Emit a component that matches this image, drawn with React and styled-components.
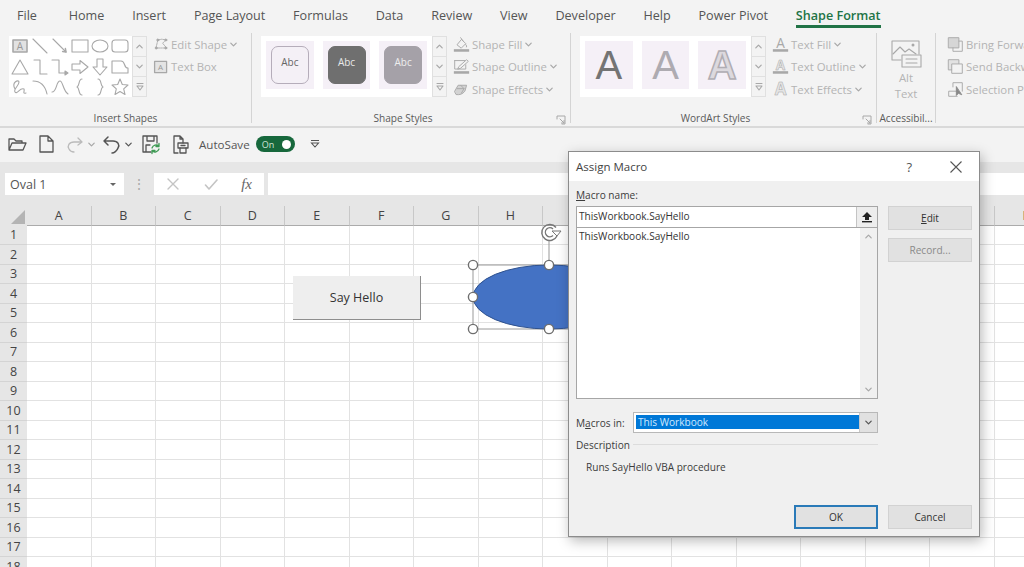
import styled, { createGlobalStyle } from "styled-components";

const UI_FONT = `"Open Sans", "Noto Sans", sans-serif`;

const GlobalStyle = createGlobalStyle`
    html, body {
        margin: 0;
        padding: 0;
        width: 1024px;
        height: 567px;
        overflow: hidden;
        background: #f3f3f3;
        font-family: ${UI_FONT};
    }
    * { box-sizing: border-box; }
    svg { flex-shrink: 0; }
`;

const TABS = ["File", "Home", "Insert", "Page Layout", "Formulas", "Data", "Review", "View", "Developer", "Help", "Power Pivot", "Shape Format"];
// the dialog covers I to O, so those headers have no readable label
const COLUMNS = ["A", "B", "C", "D", "E", "F", "G", "H", "", "", "", "", "", "", "", "P"];
const ROW_COUNT = 18;
const HANDLES = [[0, 40], [76, 40], [0, 72], [0, 104], [76, 104]];

const G = "#a8a8a8";

function Svg({ size = 20, w, h, children, vb }) {
    return (
        <svg width={w || size} height={h || size} viewBox={vb || "0 0 20 20"} fill="none" stroke={G} strokeWidth="1.1" strokeLinejoin="round" strokeLinecap="round">
            {children}
        </svg>
    );
}

const GALLERY = [
    <><rect x="3" y="4" width="14" height="12" fill="#e2e2e2" strokeWidth="1.6" /><text x="10" y="14" fontSize="10" textAnchor="middle" fill="#999" stroke="none" fontFamily="Open Sans">A</text></>,
    <path d="M3 3 L17 17" />,
    <><path d="M3 3 L16 16" /><path d="M16 16 l-3.4-.6 M16 16 l-.6-3.4" strokeWidth="1.5" /></>,
    <rect x="2" y="4" width="16" height="12" />,
    <ellipse cx="10" cy="10" rx="8" ry="6" />,
    <rect x="2" y="4" width="16" height="12" rx="3" />,
    <path d="M10 3 L18 17 H2 Z" />,
    <path d="M4 3 H10 V17 H17" />,
    <><path d="M2 3 H9 V16 H15" /><path d="M18 16 l-3-2 v4 Z" fill={G} /></>,
    <path d="M2 7 H10 V3.5 L18 10 L10 16.5 V13 H2 Z" />,
    <path d="M7 2 H13 V10 H17 L10 18 L3 10 H7 Z" />,
    <path d="M2 4 H11 C16 4 13 11 18 11 V16 H2 Z" />,
    <path d="M5 12 C1 5 9 2 9 5 C9 9 3 12 5 15 C7 18 10 10 14 12 C15 14 12 17 16 16" />,
    <path d="M3 4 C10 4 15 8 17 17" />,
    <path d="M2 15 C7 15 6 4 10 4 C13 4 13 14 18 17" />,
    <path d="M12 2 C8 2 10 9 7 10 C10 11 8 18 12 18" />,
    <path d="M8 2 C12 2 10 9 13 10 C10 11 12 18 8 18" />,
    <path d="M10 2 L12.3 7.5 L18 8 L13.7 11.8 L15 17.5 L10 14.5 L5 17.5 L6.3 11.8 L2 8 L7.7 7.5 Z" />,
];

const UpChevron = () => <Svg size={9} vb="0 0 10 10"><path d="M2 6.5 L5 3.5 L8 6.5" strokeWidth="1.4" /></Svg>;
const DownChevron = ({ dark }) => <Svg size={9} vb="0 0 10 10"><path d="M2 3.5 L5 6.5 L8 3.5" strokeWidth="1.4" stroke={dark ? "#555" : G} /></Svg>;
const MoreChevron = () => <Svg size={10} vb="0 0 10 10"><path d="M2 1.5 H8 M2 4 H8 L5 8 L2 4" strokeWidth="1.1" /></Svg>;
const Launcher = () => <Svg size={10} vb="0 0 10 10"><path d="M1 4 V1 H9 V9 H6 M4 4 L8 8 M8 5.5 V8 H5.5" strokeWidth="1" /></Svg>;

function ScrollButtons() {
    return (
        <ScrollStack>
            <ScrollButton><UpChevron /></ScrollButton>
            <ScrollButton><DownChevron /></ScrollButton>
            <ScrollButton><MoreChevron /></ScrollButton>
        </ScrollStack>
    );
}

const EditShapeIcon = () => <Svg size={16}><path d="M4 14 L6 5 L11 4 L16 5 L12 9 L17 15 L4 15" strokeDasharray="2 1.2" /><circle cx="4" cy="15" r="1.3" fill={G} /><circle cx="16" cy="15" r="1.3" fill={G} /><circle cx="6" cy="5" r="1.3" fill={G} /><circle cx="16" cy="5" r="1.3" fill={G} /></Svg>;
const TextBoxIcon = () => <Svg size={16}><rect x="2" y="3" width="15" height="14" fill="#e4e4e4" strokeWidth="1.6" /><text x="9.5" y="14" fontSize="10" textAnchor="middle" fill="#999" stroke="none" fontFamily="Open Sans">A</text></Svg>;
const ShapeFillIcon = () => <Svg size={17}><path d="M5 10 L10 4 L15 9 L10 14 Z M9 2 L12 6" /><path d="M15 10 q2 2 1 3" /><rect x="1" y="15.5" width="18" height="3" fill={G} stroke="none" /></Svg>;
const ShapeOutlineIcon = () => <Svg size={17}><path d="M2 3 H14 M2 3 V13 H15 V8" /><path d="M7 10 L16 2 L18 4 L9 12 L6 13 Z" /><rect x="1" y="15.5" width="18" height="3" fill={G} stroke="none" /></Svg>;
const ShapeEffectsIcon = () => <Svg size={17}><path d="M2 12 L6 5 H16 L14 12 Q10 17 4 16 Z" fill="#d2d2d2" /><path d="M5 9 H13 L10 14" /><path d="M9 5 L13 9" /></Svg>;
const LetterIcon = ({ bar, outline }) => (
    <Svg size={17}>
        <text x="10" y={bar ? 14 : 17} fontSize={bar ? 16 : 20} textAnchor="middle" fontFamily="Open Sans" fontWeight={outline ? 700 : 400} fill={outline ? "#e4e4e4" : G} stroke={outline ? G : "none"} strokeWidth="0.6">A</text>
        {bar && <rect x="1" y="15.5" width="18" height="3" fill={G} stroke="none" />}
    </Svg>
);
const ForwardIcon = () => <Svg size={17}><rect x="2" y="2" width="12" height="12" fill="#d6d6d6" /><path d="M14 6 H18 V18 H7 V14" /></Svg>;
const BackwardIcon = () => <Svg size={17}><rect x="2" y="2" width="12" height="12" fill="#e2e2e2" /><rect x="6" y="7" width="12" height="11" fill="#f3f3f3" /></Svg>;
const SelectionIcon = () => <Svg size={17}><path d="M7 7 V2 H18 V12" /><path d="M12 12 H2 V18 H12" /><path d="M11 7 L11 17 L13.5 14.5 L17 16 Z" fill="#888" stroke="#888" /></Svg>;

const D = "#555";
const Q = ({ children, size = 22, vb = "0 0 22 22" }) => (
    <svg width={size} height={size} viewBox={vb} fill="none" stroke={D} strokeWidth="1.3" strokeLinejoin="round" strokeLinecap="round">{children}</svg>
);

const MoreDark = () => (
    <svg width="10" height="10" viewBox="0 0 10 10" fill="none" stroke="#555" strokeWidth="1.1"><path d="M1 1.5 H9 M1.5 4 H8.5 L5 8 Z" /></svg>
);

export default function App() {
    return (
        <Page>
            <GlobalStyle />
            <TabBar>
                {TABS.map(tab => (
                    <Tab key={tab} $active={tab === "Shape Format"}>{tab}</Tab>
                ))}
            </TabBar>

            <Ribbon>
                <RibbonGroup $width={252}>
                    <GroupBody>
                        <Gallery>
                            <ShapeGrid>
                                {GALLERY.map((shape, i) => <Svg key={i}>{shape}</Svg>)}
                            </ShapeGrid>
                            <ScrollButtons />
                        </Gallery>
                        <CommandColumn>
                            <Command><EditShapeIcon /><span>Edit Shape</span><DownChevron /></Command>
                            <Command><TextBoxIcon /><span>Text Box</span></Command>
                        </CommandColumn>
                    </GroupBody>
                    <GroupLabel>Insert Shapes</GroupLabel>
                </RibbonGroup>

                <RibbonGroup $width={319}>
                    <GroupBody>
                        <Gallery>
                            <StyleGrid>
                                <StyleTile><StyleSwatch $bg="#f4f0f6" $border="#b5adba" $color="#666">Abc</StyleSwatch></StyleTile>
                                <StyleTile><StyleSwatch $bg="#6f6f6f" $border="#6f6f6f" $color="#e8e8e8">Abc</StyleSwatch></StyleTile>
                                <StyleTile><StyleSwatch $bg="#a5a1a8" $border="#a5a1a8" $color="#eee">Abc</StyleSwatch></StyleTile>
                            </StyleGrid>
                            <ScrollButtons />
                        </Gallery>
                        <CommandColumn>
                            <Command><ShapeFillIcon /><span>Shape Fill</span><DownChevron /></Command>
                            <Command><ShapeOutlineIcon /><span>Shape Outline</span><DownChevron /></Command>
                            <Command><ShapeEffectsIcon /><span>Shape Effects</span><DownChevron /></Command>
                        </CommandColumn>
                    </GroupBody>
                    <GroupLabel $launcher>Shape Styles</GroupLabel>
                    <LauncherSpot><Launcher /></LauncherSpot>
                </RibbonGroup>

                <RibbonGroup $width={306}>
                    <GroupBody>
                        <Gallery>
                            <StyleGrid>
                                <StyleTile><WordArtA $color="#747474">A</WordArtA></StyleTile>
                                <StyleTile><WordArtA $color="#aeabb1">A</WordArtA></StyleTile>
                                <StyleTile><WordArtA $color="#dcd9de" $outline>A</WordArtA></StyleTile>
                            </StyleGrid>
                            <ScrollButtons />
                        </Gallery>
                        <CommandColumn>
                            <Command><LetterIcon bar /><span>Text Fill</span><DownChevron /></Command>
                            <Command><LetterIcon bar outline /><span>Text Outline</span><DownChevron /></Command>
                            <Command><LetterIcon outline /><span>Text Effects</span><DownChevron /></Command>
                        </CommandColumn>
                    </GroupBody>
                    <GroupLabel $launcher>WordArt Styles</GroupLabel>
                    <LauncherSpot><Launcher /></LauncherSpot>
                </RibbonGroup>

                <RibbonGroup $width={59}>
                    <AltTextButton>
                        <Svg w={32} h={29} vb="0 0 32 29">
                            <path d="M11 21 H2 V2 H29 V15" />
                            <path d="M3 15 L10 8 L15 13 L19 10 L26 15" />
                            <circle cx="23" cy="6" r="1.5" fill={G} stroke="none" />
                            <rect x="12" y="16" width="19" height="12" fill="#f3f3f3" />
                            <path d="M16 20 H27 M16 24 H27" />
                        </Svg>
                        <span>Alt<br />Text</span>
                    </AltTextButton>
                    <GroupLabel>Accessibil...</GroupLabel>
                </RibbonGroup>

                <ArrangeGroup>
                    <Command><ForwardIcon /><span>Bring Forward</span></Command>
                    <Command><BackwardIcon /><span>Send Backward</span></Command>
                    <Command><SelectionIcon /><span>Selection Pane</span></Command>
                </ArrangeGroup>
            </Ribbon>

            <QuickAccess>
                <QuickIcon $width={29}>
                    <Q><path d="M3 17 V6 H8 L10 8 H16 V10 M3 17 L6 10 H20 L17 17 Z" /></Q>
                </QuickIcon>
                <QuickIcon $width={30}>
                    <Q><path d="M5 3 H13 L18 8 V19 H5 Z M13 3 V8 H18" /></Q>
                </QuickIcon>
                <QuickIcon $width={26}>
                    <Q><path d="M15 5 L19 9 L15 12 M19 9 H11 C6 9 4 13 6 16 C7 18 9 19 11 19" stroke="#bbb" /></Q>
                </QuickIcon>
                <QuickIcon $width={8}><DownChevron /></QuickIcon>
                <QuickIcon $width={22} $left={6}>
                    <Q><path d="M7 4 L3 8 L7 12 M3 8 H12 C17 8 19 12 17 15 C16 18 13 20 11 20" strokeWidth="1.5" /></Q>
                </QuickIcon>
                <QuickIcon $width={10}><DownChevron dark /></QuickIcon>
                <QuickIcon $width={30} $left={2}>
                    <Q>
                        <path d="M12 19 H4 V3 H18 V10 M8 3 V8 H15 V3 M7 19 V12 H11" />
                        <path d="M13 15 A4.5 4.5 0 0 1 20 13 M20 16 A4.5 4.5 0 0 1 13 18 M20 10.5 V13.5 H17 M13 20.5 V17.5 H16" stroke="#3f9b55" />
                    </Q>
                </QuickIcon>
                <QuickIcon $width={30}>
                    <Q>
                        <path d="M9 20 H5 V3 H11 L14 6 V10 M11 3 V6 H14" />
                        <rect x="9" y="10" width="10" height="5" /><path d="M11 15 V20 H17 V15 M12 12.5 H16" />
                    </Q>
                </QuickIcon>
                <AutoSaveLabel>AutoSave</AutoSaveLabel>
                <Toggle>On<ToggleKnob /></Toggle>
                <CustomizeSpot><MoreDark /></CustomizeSpot>
            </QuickAccess>

            <FormulaBar>
                <NameBox>
                    <span>Oval 1</span>
                    <Caret />
                </NameBox>
                <GripDots>⋮</GripDots>
                <FormulaButtons>
                    <Svg size={14} vb="0 0 14 14"><path d="M2 2 L12 12 M12 2 L2 12" stroke="#c4c4c4" strokeWidth="1.4" /></Svg>
                    <Svg size={14} vb="0 0 14 14"><path d="M1.5 8 L5 12 L13 3" stroke="#c4c4c4" strokeWidth="1.6" /></Svg>
                    <FxLabel>fx</FxLabel>
                </FormulaButtons>
                <FormulaInput />
            </FormulaBar>

            <Sheet>
                <Corner />
                {COLUMNS.map((col, i) => <ColumnHeader key={i}>{col}</ColumnHeader>)}
                {Array.from({ length: ROW_COUNT }, (_, r) => [
                    <RowHeader key={`h${r}`}>{r + 1}</RowHeader>,
                    ...COLUMNS.map((col, i) => <Cell key={`${i}-${r}`} />),
                ])}

                <SayHelloButton>Say Hello</SayHelloButton>

                <OvalDrawing width="152" height="110" viewBox="0 0 152 110">
                    <path d="M76 15 V40" stroke="#999" strokeWidth="1" />
                    <rect x="0" y="40" width="152" height="64" fill="none" stroke="#9a9a9a" strokeWidth="1" />
                    <ellipse cx="76" cy="72" rx="76" ry="32" fill="#4472c4" stroke="#2f528f" strokeWidth="1" />
                    <path d="M83 2.5 A8 8 0 1 0 84 11 M80 4 A4.5 4.5 0 1 0 80 10.5" fill="none" stroke="#777" strokeWidth="1.4" />
                    <path d="M79 6 H88 L84 11 Z" fill="#fff" stroke="#777" strokeWidth="1" />
                    {HANDLES.map(([cx, cy]) => (
                        <circle key={`${cx}-${cy}`} cx={cx} cy={cy} r="4.6" fill="#fff" stroke="#6e6e6e" strokeWidth="1.4" />
                    ))}
                </OvalDrawing>
            </Sheet>

            <Dialog>
                <DialogTitle>
                    <span>Assign Macro</span>
                    <TitleActions>
                        <HelpMark>?</HelpMark>
                        <svg width="12" height="12" viewBox="0 0 12 12" stroke="#555" strokeWidth="1.1"><path d="M.5 .5 L11.5 11.5 M11.5 .5 L.5 11.5" /></svg>
                    </TitleActions>
                </DialogTitle>
                <DialogBody>
                    <MainColumn>
                        <FieldLabel><u>M</u>acro name:</FieldLabel>
                        <NameRow>
                            <NameInput>ThisWorkbook.SayHello</NameInput>
                            <CollapseButton>
                                <svg width="12" height="12" viewBox="0 0 12 12" fill="#222"><path d="M6 1 L11 6 H8 V9 H4 V6 H1 Z" /><rect x="1" y="10" width="10" height="1.4" /></svg>
                            </CollapseButton>
                        </NameRow>
                        <MacroList>
                            <ListItems>ThisWorkbook.SayHello</ListItems>
                            <ListScrollbar>
                                <UpChevron />
                                <DownChevron />
                            </ListScrollbar>
                        </MacroList>
                        <MacrosInRow>
                            <MacrosInLabel>M<u>a</u>cros in:</MacrosInLabel>
                            <SelectBox>
                                <SelectedText>This Workbook</SelectedText>
                                <SelectArrow><DownChevron dark /></SelectArrow>
                            </SelectBox>
                        </MacrosInRow>
                        <DescriptionHead><span>Description</span><Rule /></DescriptionHead>
                        <DescriptionText>Runs SayHello VBA procedure</DescriptionText>
                    </MainColumn>
                    <SideColumn>
                        <DialogButton><u>E</u>dit</DialogButton>
                        <DialogButton $disabled>Record...</DialogButton>
                    </SideColumn>
                </DialogBody>
                <DialogFooter>
                    <DialogButton $primary>OK</DialogButton>
                    <DialogButton>Cancel</DialogButton>
                </DialogFooter>
            </Dialog>
        </Page>
    );
}

const Page = styled.div`
    position: relative;
    width: 1024px;
    height: 567px;
    overflow: hidden;
    display: flex;
    flex-direction: column;
    background: #f3f3f3;
`;

const TabBar = styled.div`
    height: 33px;
    display: flex;
    align-items: flex-start;
    gap: 27.8px;
    padding: 7px 0 0 17px;
`;

const Tab = styled.div`
    font-size: 12.6px;
    line-height: 18px;
    height: 21px;
    white-space: nowrap;
    color: ${props => props.$active ? "#217346" : "#555"};
    font-weight: ${props => props.$active ? 600 : 400};
    border-bottom: ${props => props.$active ? "3px solid #217346" : "0"};
    &:first-child { margin-right: 4px; }
`;

const Ribbon = styled.div`
    height: 95px;
    display: flex;
    border-bottom: 2px solid #d9d9d9;
    background: #f3f3f3;
`;

const RibbonGroup = styled.div`
    position: relative;
    width: ${props => props.$width}px;
    height: 90px;
    display: flex;
    flex-direction: column;
    border-right: 1px solid #d4d4d4;
`;

const GroupBody = styled.div`
    display: flex;
    padding: 3px 0 0 9px;
    height: 73px;
`;

const GroupLabel = styled.div`
    margin-top: auto;
    margin-bottom: -2px;
    padding-right: ${props => props.$launcher ? 16 : 0}px;
    text-align: center;
    font-size: 10.1px;
    line-height: 14px;
    color: #5a5a5a;
    white-space: nowrap;
`;

const LauncherSpot = styled.div`
    position: absolute;
    right: 4px;
    bottom: -2px;
    display: flex;
`;

const Gallery = styled.div`
    display: flex;
    height: 61px;
    background: #fff;
`;

const ShapeGrid = styled.div`
    width: 123px;
    display: grid;
    grid-template-columns: repeat(6, 20px);
    grid-auto-rows: 20.5px;
    padding: 0 0 0 1px;
`;

const ScrollStack = styled.div`
    width: 15px;
    display: flex;
    flex-direction: column;
    background: #f3f3f3;
    border: 1px solid #e0e0e0;
`;

const ScrollButton = styled.div`
    flex: 1;
    display: flex;
    align-items: center;
    justify-content: center;
    & + & { border-top: 1px solid #e0e0e0; }
`;

const CommandColumn = styled.div`
    display: flex;
    flex-direction: column;
    gap: 4.5px;
    padding: 0 0 0 6px;
    margin-top: -1px;
`;

const Command = styled.div`
    display: flex;
    align-items: center;
    gap: 2px;
    height: 18px;
    font-size: 11.4px;
    color: #b4b4b4;
    white-space: nowrap;
`;

const StyleGrid = styled.div`
    display: flex;
    gap: 9px;
    padding: 5px 5px;
    width: 171px;
`;

const StyleTile = styled.div`
    width: 48px;
    height: 48px;
    background: #f5f0f7;
    display: flex;
    align-items: center;
    justify-content: center;
    overflow: hidden;
`;

const StyleSwatch = styled.div`
    width: 38px;
    height: 38px;
    border-radius: 7px;
    border: 1px solid ${props => props.$border};
    background: ${props => props.$bg};
    color: ${props => props.$color};
    font-size: 10px;
    display: flex;
    align-items: center;
    justify-content: center;
    padding-bottom: 6px;
`;

const WordArtA = styled.div`
    font-family: "Liberation Sans", sans-serif;
    font-size: 40px;
    line-height: 40px;
    font-weight: ${props => props.$outline ? 700 : 400};
    color: ${props => props.$color};
    -webkit-text-stroke: ${props => props.$outline ? "1.5px #b0adb3" : "0"};
`;

const AltTextButton = styled.div`
    display: flex;
    flex-direction: column;
    align-items: center;
    padding-top: 6px;
    gap: 2px;
    font-size: 11.4px;
    line-height: 16px;
    color: #b4b4b4;
    text-align: center;
`;

const ArrangeGroup = styled.div`
    display: flex;
    flex-direction: column;
    gap: 4.5px;
    padding: 2px 0 0 11px;
    white-space: nowrap;
    overflow: hidden;
    width: 88px;
`;

const QuickAccess = styled.div`
    height: 34px;
    display: flex;
    align-items: center;
    padding: 0 0 2px 2px;
`;

const QuickIcon = styled.div`
    width: ${props => props.$width}px;
    margin-left: ${props => props.$left || 0}px;
    display: flex;
    align-items: center;
    justify-content: center;
`;

const AutoSaveLabel = styled.div`
    font-size: 11.6px;
    color: #555;
    margin-left: 4px;
`;

const Toggle = styled.div`
    width: 39px;
    height: 16px;
    margin-left: 6px;
    padding: 0 4px 0 6px;
    border-radius: 8px;
    background: #17683c;
    color: #cfe3d6;
    font-size: 9px;
    display: flex;
    align-items: center;
    justify-content: space-between;
`;

const ToggleKnob = styled.span`
    width: 9px;
    height: 9px;
    border-radius: 50%;
    background: #fff;
`;

const CustomizeSpot = styled.div`
    margin-left: 15px;
    display: flex;
`;

const FormulaBar = styled.div`
    height: 44px;
    padding: 11px 0 0 5px;
    display: flex;
    align-items: flex-start;
    background: #e6e6e6;
`;

const NameBox = styled.div`
    width: 119px;
    height: 22px;
    background: #fff;
    color: #555;
    font-size: 12.5px;
    padding: 0 8px 0 5px;
    display: flex;
    align-items: center;
    justify-content: space-between;
`;

const Caret = styled.span`
    width: 0;
    height: 0;
    border-left: 3px solid transparent;
    border-right: 3px solid transparent;
    border-top: 3px solid #666;
`;

const GripDots = styled.div`
    width: 30px;
    text-align: center;
    color: #aaa;
    font-size: 14px;
    line-height: 22px;
`;

const FormulaButtons = styled.div`
    width: 110px;
    height: 22px;
    background: #fff;
    display: flex;
    align-items: center;
    justify-content: space-between;
    padding: 0 12px 0 12px;
`;

const FxLabel = styled.span`
    font-family: "Liberation Serif", serif;
    font-style: italic;
    font-size: 15px;
    color: #666;
`;

const FormulaInput = styled.div`
    flex: 1;
    height: 22px;
    margin-left: 4px;
    background: #fff;
`;

const Sheet = styled.div`
    position: relative;
    flex: 1;
    overflow: hidden;
    background: #fff;
    display: grid;
    grid-template-columns: 27px repeat(16, 64.5px);
    grid-template-rows: 19.5px;
    grid-auto-rows: 19.5px;
`;

const Corner = styled.div`
    background: #e6e6e6;
    position: relative;
    &::after {
        content: "";
        position: absolute;
        right: 2px;
        bottom: 2px;
        width: 0;
        height: 0;
        border-left: 14px solid transparent;
        border-bottom: 14px solid #b4b4b4;
    }
`;

const ColumnHeader = styled.div`
    background: #e6e6e6;
    border-right: 1px solid #c8c8c8;
    border-bottom: 1px solid #ababab;
    color: #444;
    font-size: 12.5px;
    display: flex;
    align-items: center;
    justify-content: center;
`;

const RowHeader = styled.div`
    background: #e6e6e6;
    color: #444;
    font-size: 12.5px;
    border-bottom: 1px solid #d4d4d4;
    display: flex;
    align-items: center;
    justify-content: center;
`;

const Cell = styled.div`
    border-right: 1px solid #e2e2e2;
    border-bottom: 1px solid #e2e2e2;
`;

const SayHelloButton = styled.div`
    position: absolute;
    left: 293px;
    top: 70px;
    width: 128px;
    height: 44px;
    background: #eeeeee;
    border-right: 1.5px solid #8e8e8e;
    border-bottom: 1.5px solid #8e8e8e;
    color: #333;
    font-size: 12.5px;
    font-weight: 500;
    display: flex;
    align-items: center;
    justify-content: center;
`;

const OvalDrawing = styled.svg`
    position: absolute;
    left: 473px;
    top: 19px;
    overflow: visible;
`;

const Dialog = styled.div`
    position: absolute;
    left: 568px;
    top: 151px;
    width: 412px;
    height: 386px;
    background: #f0f0f0;
    border: 1px solid #8c8c8c;
    box-shadow: 2px 4px 12px rgba(0, 0, 0, 0.28);
    display: flex;
    flex-direction: column;
    font-size: 10.1px;
    color: #3c3c3c;
`;

const DialogTitle = styled.div`
    height: 29px;
    background: #fff;
    padding: 0 17px 0 7px;
    font-size: 11.5px;
    color: #444;
    display: flex;
    align-items: center;
    justify-content: space-between;
`;

const TitleActions = styled.div`
    display: flex;
    align-items: center;
    gap: 38px;
`;

const HelpMark = styled.span`
    font-size: 13px;
    color: #555;
`;

const DialogBody = styled.div`
    flex: 1;
    display: flex;
    gap: 10px;
    padding: 7px 7px 0 7px;
`;

const MainColumn = styled.div`
    width: 302px;
    display: flex;
    flex-direction: column;
`;

const SideColumn = styled.div`
    padding-top: 18px;
    display: flex;
    flex-direction: column;
    gap: 8px;
`;

const FieldLabel = styled.div`
    height: 18px;
    line-height: 14px;
    white-space: nowrap;
`;

const NameRow = styled.div`
    display: flex;
    height: 22px;
    background: #fff;
    border: 1px solid #a6a6a6;
`;

const NameInput = styled.div`
    flex: 1;
    line-height: 18px;
    padding-left: 2px;
    color: #333;
`;

const CollapseButton = styled.div`
    width: 21px;
    background: #ededed;
    border-left: 1px solid #c4c4c4;
    display: flex;
    align-items: center;
    justify-content: center;
`;

const MacroList = styled.div`
    height: 171px;
    display: flex;
    background: #fff;
    border: 1px solid #a6a6a6;
    border-top: 0;
`;

const ListItems = styled.div`
    flex: 1;
    padding: 0 0 0 2px;
    line-height: 16px;
    color: #333;
`;

const ListScrollbar = styled.div`
    width: 17px;
    background: #f0f0f0;
    padding: 4px 0;
    display: flex;
    flex-direction: column;
    align-items: center;
    justify-content: space-between;
`;

const MacrosInRow = styled.div`
    display: flex;
    align-items: center;
    margin-top: 13px;
    height: 21px;
`;

const MacrosInLabel = styled.div`
    width: 57px;
    white-space: nowrap;
`;

const SelectBox = styled.div`
    flex: 1;
    height: 21px;
    background: #fff;
    border: 1px solid #b8b8b8;
    padding: 2px 0 3px 2px;
    display: flex;
`;

const SelectedText = styled.div`
    flex: 1;
    background: #0078d7;
    color: #cfe8ff;
    line-height: 14px;
    padding-left: 2px;
`;

const SelectArrow = styled.div`
    width: 18px;
    margin: -2px 0 -3px 0;
    background: #e1e1e1;
    border-left: 1px solid #c8c8c8;
    display: flex;
    align-items: center;
    justify-content: center;
`;

const DescriptionHead = styled.div`
    margin-top: 4px;
    display: flex;
    align-items: center;
    gap: 3px;
    height: 16px;
`;

const Rule = styled.div`
    flex: 1;
    height: 1px;
    background: #dcdcdc;
    margin-top: -2px;
`;

const DescriptionText = styled.div`
    margin: 6px 0 0 10px;
    line-height: 16px;
`;

const DialogFooter = styled.div`
    display: flex;
    justify-content: flex-end;
    gap: 10px;
    padding: 0 7px 7px 0;
`;

const DialogButton = styled.div`
    width: 84px;
    height: 24px;
    background: #e1e1e1;
    border: ${props => props.$primary ? "2px solid #2a7ab8" : "1px solid #d2d2d2"};
    color: ${props => props.$disabled ? "#8a8a8a" : "#333"};
    display: flex;
    align-items: center;
    justify-content: center;
`;
